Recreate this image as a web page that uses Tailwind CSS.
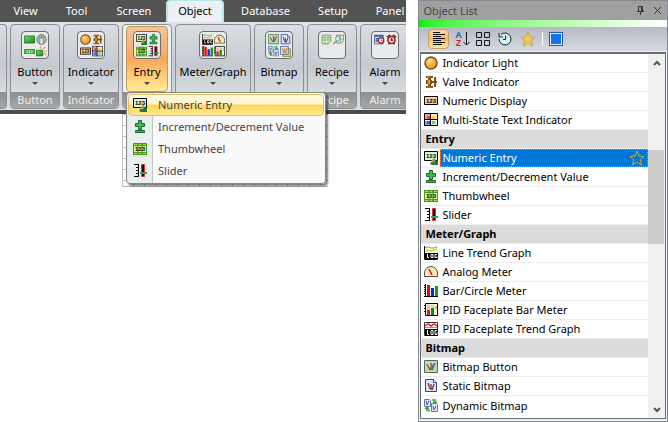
<!DOCTYPE html>
<html lang="en">
<head>
    <meta charset="UTF-8">
    <meta name="viewport" content="width=device-width, initial-scale=1.0">
    <title>Object List</title>
    <script src="https://cdn.jsdelivr.net/npm/@tailwindcss/browser@4"></script>
</head>
<body class="bg-white font-['Noto_Sans','Open_Sans',sans-serif] text-[11px] leading-4 text-black">
    <!-- Icon set -->
    <svg class="absolute size-0">
        <defs>
            <radialGradient id="amber" cx="0.4" cy="0.35"><stop offset="0" stop-color="#ffdc98"/><stop offset="1" stop-color="#f8a020"/></radialGradient>
            <linearGradient id="green" x1="0" y1="0" x2="1" y2="1"><stop offset="0" stop-color="#7fdc70"/><stop offset="1" stop-color="#0c8a14"/></linearGradient>
            <symbol id="light" viewBox="0 0 14 14"><circle cx="7" cy="7" r="6" fill="url(#amber)" stroke="#75541f" stroke-width="1.500"/></symbol>
            <symbol id="valve" viewBox="0 0 14 14"><path d="M2 1h7v2H7v2h1v4H7v2h2v2H2v-2h2V9H2V5h2V3H2zM10 2h2v4h1v2h-1v4h-2V8H8V6h2z" fill="#80520c"/><path d="M4 5h2v4H4z" fill="#d4a64c"/><path d="M3 2h3M3 12h4" stroke="#b98a3a"/></symbol>
            <symbol id="numdisp" viewBox="0 0 14 14"><path d="M.5 2.500h13v8H.5z" fill="#ffd08a" stroke="#000"/><text x="7" y="9" font-size="6" font-weight="bold" text-anchor="middle" font-family="Liberation Sans">123</text></symbol>
            <symbol id="multi" viewBox="0 0 14 14"><path d="M.5 .5h13v12H.5z" fill="#fff" stroke="#000"/><path d="M1 1h5v5H1z" fill="#f3a0a0"/><path d="M3 3h3v3H3z" fill="#d94848"/><path d="M8 1h5v5H8z" fill="#fff0b8"/><path d="M8 3h3v3H8z" fill="#f2c94a"/><path d="M1 8h5v4H1z" fill="#8da0f6"/><path d="M3 8h3v3H3z" fill="#3553d6"/><path d="M8 8h5v4H8z" fill="#d3efcf"/><path d="M8 8h3v3H8z" fill="#7cc47a"/><path d="M6.500 0v13M0 6.500h14" stroke="#000"/></symbol>
            <symbol id="numentry" viewBox="0 0 14 14"><path d="M.5 .5h13v9H.5z" fill="#d6f7cb" stroke="#000"/><text x="7" y="7" font-size="6" font-weight="bold" text-anchor="middle" font-family="Liberation Sans">123</text><path d="M6 13l3-4 5 1v4H8z" fill="#1f7a35"/><path d="M7 10l3-3 2 2-3 3z" fill="#b78b5a"/></symbol>
            <symbol id="incdec" viewBox="0 0 14 14"><path d="M5.500 .5h3v3h3v3h-3v3h-3v-3h-3v-3h3zM2.500 10.500h9v2h-9z" fill="#43b653" stroke="#176e2c"/></symbol>
            <symbol id="thumb" viewBox="0 0 14 14"><path d="M0 1h14v12H0z" fill="#4b9b12"/><path d="M1 4h12v6H1z" fill="#d6f29c"/><path d="M1 2.500h12M1 11.500h12" stroke="#a4e04e" stroke-dasharray="3 1.500"/><path d="M5 1v12M9 1v12" stroke="#4b9b12"/><text x="7" y="9" font-size="6" font-weight="bold" text-anchor="middle" font-family="Liberation Sans">123</text></symbol>
            <symbol id="slider" viewBox="0 0 14 14"><path d="M1 .5h5M3 3.500h3M3 6.500h3M3 9.500h3M1 12.500h5M5.500 0v13" stroke="#000"/><path d="M8.500 .5h3v12h-3z" fill="#111" stroke="#ee2b3b"/><path d="M7 8h7v2H7z" fill="#2fa84a"/></symbol>
            <symbol id="trend" viewBox="0 0 14 14"><path d="M.5 0v13.500h13" stroke="#000" fill="none"/><path d="M1 2l3-1 3 1 3 0 3-1" stroke="#63b33b" fill="none"/><path d="M1 5l3-1 3 1 3-1 3-1" stroke="#dfcb3d" stroke-width="1.500" fill="none"/><path d="M1 7h13v6H1z"/><path d="M3.500 8v3.500H5M7 8.500h2v3H7zM13 8.500h-2v3h2v-1" stroke="#fff" fill="none"/></symbol>
            <symbol id="meter" viewBox="0 0 14 14"><path d="M.5 11.500V8a6.500 6.500 0 0 1 13 0v3.500z" fill="#ffedb8" stroke="#4a4a4a"/><path d="M5 4l3 6" stroke="#f00" stroke-width="1.500"/></symbol>
            <symbol id="bars" viewBox="0 0 14 14"><path d="M1.500 0v13M0 12.500h14" stroke="#000"/><path d="M0 1.500h2M0 3.500h2M0 5.500h2M0 7.500h2M0 9.500h2" stroke="#000"/><path d="M3 1h3v11H3z" fill="#f00"/><path d="M7 4h3v8H7z" fill="#0a28f0"/><path d="M11 2h3v10h-3z" fill="#12a012"/></symbol>
            <symbol id="pidbar" viewBox="0 0 14 14"><path d="M1.500 .5h12v12h-12z" fill="#f8f5dc" stroke="#000"/><path d="M0 2.500h2M0 5.500h2M0 8.500h2" stroke="#000"/><path d="M3 2h3v5H3z" fill="#f6b5b5"/><path d="M3 7h3v5H3z" fill="#dc1c2c"/><path d="M7 2h3v3H7z" fill="#b6e4b0"/><path d="M7 5h3v7H7z" fill="#128a22"/><path d="M11 3h2v3h-2z" fill="#f0bf3a"/></symbol>
            <symbol id="pidtrend" viewBox="0 0 14 14"><path d="M.5 .5h13v13H.5z" fill="#fff" stroke="#333"/><path d="M1 4l3-2 3 2 3-2 3 2" stroke="#e02020" stroke-width="1.500" fill="none"/><path d="M1 5.500h12" stroke="#64b868"/><path d="M1 7h13v7H1z"/><path d="M3.500 8v4.500H5M7 8.500h2v4H7zM13 8.500h-2v4h2v-2" stroke="#fff" fill="none"/></symbol>
            <symbol id="bmpbutton" viewBox="0 0 14 14"><path d="M.5 .5h13v12H.5z" fill="#b4ddb0" stroke="#4f6f4f"/><path d="M3 4l3 6M7 3v7M11 3l-3 7" stroke="#a34b2d" stroke-width="1.500"/><path d="M4 3l2 4" stroke="#e5e5ff"/><path d="M9 4l-1 5" stroke="#4c6bc2"/></symbol>
            <symbol id="bmpstatic" viewBox="0 0 14 14"><path d="M1.500 .5h8l3 3v9h-11z" fill="#dbe7ff" stroke="#26459c"/><path d="M9.500 .5v3h3" fill="#fff" stroke="#26459c"/><path d="M4 4l2 6M7 5v6M10 5l-2 6" stroke="#8a4a4a" stroke-width="1.500"/><path d="M5 6l1 3" stroke="#5a7be0"/></symbol>
            <symbol id="bmpdyn" viewBox="0 0 14 14"><path d="M.5 .5h5l1 1v6h-6zM7.500 4.500h5l1 1v7h-6z" fill="#dbe7ff" stroke="#5d78bd"/><path d="M2 2l1 4 2-4M9 7l1 4 2-4" stroke="#7e4b64" fill="none"/><path d="M8 1h3v3M9 3l2 1 2-1M6 11.500H3V8M1 10l2-2 2 2" stroke="#35a642" stroke-width="1.500" fill="none"/></symbol>
            <symbol id="bmpmulti" viewBox="0 0 14 14"><path d="M3.500 3.500h10v10h-10z" fill="#c3d967" stroke="#738c25"/><path d="M.5 .5h10v10H.5z" fill="#ece8b7" stroke="#3454bd"/><path d="M3 3l2 6M6 3v6M9 3l-2 6" stroke="#9a5040"/></symbol>
            <symbol id="btn" viewBox="0 0 14 14"><path d="M.5 2.500h13v9H.5z" fill="url(#green)" stroke="#176d1d"/></symbol>
            <symbol id="knob" viewBox="0 0 14 14"><circle cx="7" cy="7" r="6" fill="#b3b6b7" stroke="#5b6062"/><path d="M5 1h4v12H5z" fill="#f5f5f5" stroke="#6f7375"/><path d="M7 2v4" stroke="#2aa52a" stroke-width="2"/></symbol>
            <symbol id="btnrow" viewBox="0 0 14 14"><path d="M.5 4.500h13v5H.5z" fill="#4bc143" stroke="#187721"/><path d="M4 5v5M7 5v5M10 5v5" stroke="#c8f2bf"/></symbol>
            <symbol id="btnlit" viewBox="0 0 14 14"><path d="M.5 5.500h8v7h-8z" fill="url(#green)" stroke="#176d1d"/><path d="M9 4l3-3M10 7l4-1M6 4V0M10 9l3 2" stroke="#f3a546" stroke-width="1.500"/></symbol>
            <symbol id="recipe" viewBox="0 0 14 14"><path d="M1.500 1.500h11v8l-3 3h-8z" fill="#e8f2dd" stroke="#598f34"/><path d="M1 4.500h12M1 7.500h11M5 1v12M9 1v12" stroke="#79aa58"/></symbol>
            <symbol id="recipefind" viewBox="0 0 14 14"><path d="M4.500 1.500h9v7l-3 3h-6z" fill="#e8f2dd" stroke="#598f34"/><path d="M5 6.500h8M9.500 2v9" stroke="#79aa58"/><path d="M4 9l-4 4" stroke="#e08a32" stroke-width="2"/><circle cx="6" cy="6" r="3" fill="#c6e9fb" stroke="#728ca0"/></symbol>
            <symbol id="alarmlist" viewBox="0 0 14 14"><path d="M.5 1.500h11v11H.5z" fill="#dfe9fb" stroke="#25518f"/><path d="M1 2.500h11M2 6h4M2 9h3" stroke="#25518f" stroke-width="2"/><circle cx="9" cy="8" r="3.500" fill="#fff" stroke="#8e2424" stroke-width="1.500"/><path d="M9 6v2.500h2" stroke="#8e2424" fill="none"/></symbol>
            <symbol id="alarm" viewBox="0 0 14 14"><circle cx="7" cy="7.500" r="4.500" fill="#f4dede" stroke="#8e2424" stroke-width="2"/><path d="M1 4l4-3M13 4L9 1M3 13l2-2M11 13l-2-2M7 5v3h2" stroke="#8e2424" stroke-width="2" fill="none"/></symbol>
            <symbol id="star" viewBox="0 0 16 16"><path d="M8 1l2 5 5 .5-3.800 3.200L12.500 15 8 12l-4.500 3 1.300-5.300L1 6.500 6 6z"/></symbol>
            <symbol id="arrow" viewBox="0 0 6 3"><path d="M0 0h6L3 3z" fill="#4a4a4a"/></symbol>
        </defs>
    </svg>

    <div class="flex min-h-screen items-stretch gap-3">
        <!-- Ribbon -->
        <div class="relative min-w-0 flex-[407]">
            <div class="overflow-hidden">
                <nav class="flex h-[22px] bg-[#535353] text-white">
                    <a href="#" class="w-[51px] shrink-0 pt-[3px] text-center">View</a>
                    <a href="#" class="w-[51px] shrink-0 pt-[3px] text-center">Tool</a>
                    <a href="#" class="w-[64px] shrink-0 pt-[3px] text-center">Screen</a>
                    <a href="#" class="w-[58px] shrink-0 rounded-t border-x-2 border-t border-[#b9e6ec] bg-[#eceff3] pt-[2px] text-center text-black">Object</a>
                    <a href="#" class="w-[83px] shrink-0 pt-[3px] text-center">Database</a>
                    <a href="#" class="w-[52px] shrink-0 pt-[3px] text-center">Setup</a>
                    <a href="#" class="w-[62px] shrink-0 pt-[3px] text-center">Panel</a>
                </nav>
                <div class="flex h-[88px] gap-[3px] bg-linear-to-b from-[#dfe2e7] via-[#c6cbd3] to-[#dbdfe3] pt-[2px] pb-[1px]">
                    <section class="flex w-[7px] shrink-0 flex-col justify-end rounded-r-sm border border-l-0 border-[#8b8f93] bg-linear-to-b from-[#dadde1] via-[#c5cad1] to-[#e2e8ea]">
                        <div class="h-4 bg-linear-to-b from-[#8d8e8e] to-[#a6a7a7]"></div>
                    </section>
                    <section class="flex w-[50px] shrink-0 flex-col overflow-hidden rounded-sm border border-[#8b8f93] bg-linear-to-b from-[#dadde1] via-[#c5cad1] to-[#e2e8ea]">
                        <button class="flex flex-1 flex-col items-center pt-[6px]">
                            <span class="grid size-7 shrink-0 grid-cols-2 place-items-center rounded-sm border border-[#6e6e6e] bg-[#e9eaeb] p-px">
                                <svg class="size-[11px]"><use href="#btn"/></svg><svg class="size-[11px]"><use href="#knob"/></svg>
                                <svg class="size-[11px]"><use href="#btnrow"/></svg><svg class="size-[11px]"><use href="#btnlit"/></svg>
                            </span>
                            <span class="mt-[5px]">Button</span>
                            <svg class="mt-[2px] h-[3px] w-[6px]"><use href="#arrow"/></svg>
                        </button>
                        <h2 class="h-4 bg-linear-to-b from-[#8d8e8e] to-[#a6a7a7] text-center text-[#f0f0f0]">Button</h2>
                    </section>
                    <section class="flex w-[56px] shrink-0 flex-col overflow-hidden rounded-sm border border-[#8b8f93] bg-linear-to-b from-[#dadde1] via-[#c5cad1] to-[#e2e8ea]">
                        <button class="flex flex-1 flex-col items-center pt-[6px]">
                            <span class="grid size-7 shrink-0 grid-cols-2 place-items-center rounded-sm border border-[#6e6e6e] bg-[#e9eaeb] p-px">
                                <svg class="size-[11px]"><use href="#light"/></svg><svg class="size-[11px]"><use href="#valve"/></svg>
                                <svg class="size-[11px]"><use href="#numdisp"/></svg><svg class="size-[11px]"><use href="#multi"/></svg>
                            </span>
                            <span class="mt-[5px]">Indicator</span>
                            <svg class="mt-[2px] h-[3px] w-[6px]"><use href="#arrow"/></svg>
                        </button>
                        <h2 class="h-4 bg-linear-to-b from-[#8d8e8e] to-[#a6a7a7] text-center text-[#f0f0f0]">Indicator</h2>
                    </section>
                    <section class="flex w-[50px] shrink-0 flex-col overflow-hidden rounded-sm border border-[#8b8f93] bg-[#eef1f3]">
                        <button class="mx-[3px] mt-px flex flex-1 flex-col items-center rounded-sm border border-[#c39a55] bg-linear-to-b from-[#f1c59c] via-[#faa659] to-[#fdec94] pt-[4px]">
                            <span class="grid size-7 shrink-0 grid-cols-2 place-items-center rounded-sm border border-[#6e6e6e] bg-[#e9eaeb] p-px">
                                <svg class="size-[11px]"><use href="#numentry"/></svg><svg class="size-[11px]"><use href="#incdec"/></svg>
                                <svg class="size-[11px]"><use href="#thumb"/></svg><svg class="size-[11px]"><use href="#slider"/></svg>
                            </span>
                            <span class="mt-[5px]">Entry</span>
                            <svg class="mt-[2px] h-[3px] w-[6px]"><use href="#arrow"/></svg>
                        </button>
                        <div class="h-4 bg-linear-to-b from-[#8d8e8e] to-[#a6a7a7]"></div>
                    </section>
                    <section class="flex w-[76px] shrink-0 flex-col overflow-hidden rounded-sm border border-[#8b8f93] bg-linear-to-b from-[#dadde1] via-[#c5cad1] to-[#e2e8ea]">
                        <button class="flex flex-1 flex-col items-center pt-[6px]">
                            <span class="grid size-7 shrink-0 grid-cols-2 place-items-center rounded-sm border border-[#6e6e6e] bg-[#e9eaeb] p-px">
                                <svg class="size-[11px]"><use href="#trend"/></svg><svg class="size-[11px]"><use href="#meter"/></svg>
                                <svg class="size-[11px]"><use href="#bars"/></svg><svg class="size-[11px]"><use href="#pidbar"/></svg>
                            </span>
                            <span class="mt-[5px]">Meter/Graph</span>
                            <svg class="mt-[2px] h-[3px] w-[6px]"><use href="#arrow"/></svg>
                        </button>
                        <div class="h-4 bg-linear-to-b from-[#8d8e8e] to-[#a6a7a7]"></div>
                    </section>
                    <section class="flex w-[50px] shrink-0 flex-col overflow-hidden rounded-sm border border-[#8b8f93] bg-linear-to-b from-[#dadde1] via-[#c5cad1] to-[#e2e8ea]">
                        <button class="flex flex-1 flex-col items-center pt-[6px]">
                            <span class="grid size-7 shrink-0 grid-cols-2 place-items-center rounded-sm border border-[#6e6e6e] bg-[#e9eaeb] p-px">
                                <svg class="size-[11px]"><use href="#bmpbutton"/></svg><svg class="size-[11px]"><use href="#bmpstatic"/></svg>
                                <svg class="size-[11px]"><use href="#bmpdyn"/></svg><svg class="size-[11px]"><use href="#bmpmulti"/></svg>
                            </span>
                            <span class="mt-[5px]">Bitmap</span>
                            <svg class="mt-[2px] h-[3px] w-[6px]"><use href="#arrow"/></svg>
                        </button>
                        <div class="h-4 bg-linear-to-b from-[#8d8e8e] to-[#a6a7a7]"></div>
                    </section>
                    <section class="flex w-[50px] shrink-0 flex-col overflow-hidden rounded-sm border border-[#8b8f93] bg-linear-to-b from-[#dadde1] via-[#c5cad1] to-[#e2e8ea]">
                        <button class="flex flex-1 flex-col items-center pt-[6px]">
                            <span class="grid size-7 shrink-0 grid-cols-2 grid-rows-2 place-items-center rounded-sm border border-[#6e6e6e] bg-[#e9eaeb] p-px">
                                <svg class="size-[11px]"><use href="#recipe"/></svg><svg class="size-[11px]"><use href="#recipefind"/></svg>
                            </span>
                            <span class="mt-[5px]">Recipe</span>
                            <svg class="mt-[2px] h-[3px] w-[6px]"><use href="#arrow"/></svg>
                        </button>
                        <h2 class="h-4 bg-linear-to-b from-[#8d8e8e] to-[#a6a7a7] text-center text-[#f0f0f0]">Recipe</h2>
                    </section>
                    <section class="flex w-[50px] shrink-0 flex-col overflow-hidden rounded-sm border border-[#8b8f93] bg-linear-to-b from-[#dadde1] via-[#c5cad1] to-[#e2e8ea]">
                        <button class="flex flex-1 flex-col items-center pt-[6px]">
                            <span class="grid size-7 shrink-0 grid-cols-2 grid-rows-2 place-items-center rounded-sm border border-[#6e6e6e] bg-[#e9eaeb] p-px">
                                <svg class="size-[11px]"><use href="#alarmlist"/></svg><svg class="size-[11px]"><use href="#alarm"/></svg>
                            </span>
                            <span class="mt-[5px]">Alarm</span>
                            <svg class="mt-[2px] h-[3px] w-[6px]"><use href="#arrow"/></svg>
                        </button>
                        <h2 class="h-4 bg-linear-to-b from-[#8d8e8e] to-[#a6a7a7] text-center text-[#f0f0f0]">Alarm</h2>
                    </section>
                </div>
                <div class="h-1 bg-[#4b4b4d]"></div>
                <!-- Canvas grid behind the menu -->
                <div class="ml-[122px] h-[73px] w-[206px] border-b border-[#b5b5b5] bg-[repeating-linear-gradient(to_right,#c4c4c4_0_1px,transparent_1px_11px),repeating-linear-gradient(to_bottom,#c4c4c4_0_1px,transparent_1px_11px)]"></div>
            </div>

            <!-- Entry menu -->
            <div class="absolute top-[92px] left-[126px] w-[200px] rounded-sm border border-[#868686] bg-[linear-gradient(to_right,#e9eeee_0_25px,#c5c5c5_25px_26px,#fafafa_26px)] p-px text-[#444] shadow-[2px_2px_2px_rgba(0,0,0,0.5)]" role="menu">
                <button role="menuitem" class="flex h-[22px] w-full items-center gap-[11px] rounded-sm border border-[#e3c06b] bg-linear-to-b from-[#fff6d6] from-45% via-[#ffd74c] via-50% to-[#ffe793] pl-1"><svg class="size-3.5"><use href="#numentry"/></svg>Numeric Entry</button>
                <button role="menuitem" class="flex h-[22px] w-full items-center gap-[11px] pl-[5px]"><svg class="size-3.5"><use href="#incdec"/></svg>Increment/Decrement Value</button>
                <button role="menuitem" class="flex h-[22px] w-full items-center gap-[11px] pl-[5px]"><svg class="size-3.5"><use href="#thumb"/></svg>Thumbwheel</button>
                <button role="menuitem" class="flex h-[22px] w-full items-center gap-[11px] pl-[5px]"><svg class="size-3.5"><use href="#slider"/></svg>Slider</button>
            </div>
        </div>

        <!-- Object list panel -->
        <aside class="flex min-w-0 flex-[248] flex-col border border-[#868993] bg-[#f0f0f0]">
            <header class="flex h-[19px] items-center gap-2 bg-[#a0a0a0] pr-[5px] pl-1 text-[#444]">
                <h1 class="flex-1">Object List</h1>
                <button aria-label="Pin"><svg class="size-[9px]" viewBox="0 0 9 9" fill="none" stroke="#333"><path d="M2.500 5.500v-5h4v5M5.500 1v4M1 5.500h7M4.500 6v3"/></svg></button>
                <button aria-label="Close"><svg class="size-[9px]" viewBox="0 0 9 9" stroke="#333"><path d="M1 1l7 7M8 1l-7 7"/></svg></button>
            </header>
            <div class="h-[7px] bg-linear-to-r from-[#00f000] to-white"></div>
            <div class="flex h-[24px] items-center bg-linear-to-b from-[#b4bac5] to-[#d6dae0] pl-[9px]" role="toolbar">
                <button aria-label="By category" class="flex h-5 w-[21px] items-center justify-center rounded-sm border border-[#c59f62] bg-linear-to-b from-[#ffd5a2] via-[#f9b565] to-[#fdeaa0]"><svg class="size-4" viewBox="0 0 16 16" stroke="#111"><path d="M2 1.500h7M2 3.500h12M2 5.500h8M2 7.500h12M2 9.500h8M2 11.500h12M2 13.500h9"/></svg></button>
                <button aria-label="Sort by name" class="ml-[5px] flex gap-px">
                    <span class="flex w-2 flex-col font-['Liberation_Sans',sans-serif] text-[9px] leading-[8px] font-bold"><span class="text-[#1560ac]">A</span><span class="text-[#e01b24]">Z</span></span>
                    <svg class="h-4 w-[7px]" viewBox="0 0 7 16" fill="none" stroke="#111"><path d="M3.500 1v13M.5 11l3 3 3-3"/></svg>
                </button>
                <button aria-label="Icons" class="ml-[6px]"><svg class="size-[14px]" viewBox="0 0 14 14" fill="none" stroke="#111"><path d="M.5 .5h5v5h-5zM8.500 .5h5v5h-5zM.5 8.500h5v5h-5zM8.500 8.500h5v5h-5z"/></svg></button>
                <button aria-label="History" class="ml-2"><svg class="size-[14px]" viewBox="0 0 14 14"><path d="M3 2.500A6 6 0 1 1 1 7" fill="#d6f0f7" stroke="#222"/><path d="M1 1v4h4M7.500 3.500v4H5" stroke="#222" fill="none"/></svg></button>
                <button aria-label="Favorites" class="ml-2"><svg class="size-4 fill-[#f2c75c] stroke-[#d9a53a]"><use href="#star"/></svg></button>
                <span class="mx-[6px] h-[14px] w-px bg-white"></span>
                <button aria-label="Preview" class="size-[14px] border border-[#1b5ec0] bg-[#1b71ea] outline outline-[#e4edf8] -outline-offset-2"></button>
            </div>
            <div class="m-px mb-[2px] flex flex-1 border border-t-2 border-[#6b6e75] bg-white">
                <ul class="min-w-0 flex-1">
                    <li class="flex h-[19px] items-center gap-1 border-b border-[#ededed] pl-[3px]"><svg class="size-3.5"><use href="#light"/></svg>Indicator Light</li>
                    <li class="flex h-[19px] items-center gap-1 border-b border-[#ededed] pl-[3px]"><svg class="size-3.5"><use href="#valve"/></svg>Valve Indicator</li>
                    <li class="flex h-[19px] items-center gap-1 border-b border-[#ededed] pl-[3px]"><svg class="size-3.5"><use href="#numdisp"/></svg>Numeric Display</li>
                    <li class="flex h-[19px] items-center gap-1 border-b border-[#ededed] pl-[3px]"><svg class="size-3.5"><use href="#multi"/></svg>Multi-State Text Indicator</li>
                    <li class="flex h-[19px] items-center border-b border-[#ededed] bg-[#dbdbdb] pl-1 font-bold">Entry</li>
                    <li class="flex h-[19px] items-center gap-[2px] border-b border-[#ededed] pl-[3px]"><svg class="size-3.5"><use href="#numentry"/></svg><span class="flex h-full flex-1 items-center justify-between border border-dotted border-[#ff8728] bg-[#0078d7] pr-[2px] pl-px text-white">Numeric Entry<svg class="size-4 fill-none stroke-[#d9a62e]"><use href="#star"/></svg></span></li>
                    <li class="flex h-[19px] items-center gap-1 border-b border-[#ededed] pl-[3px]"><svg class="size-3.5"><use href="#incdec"/></svg>Increment/Decrement Value</li>
                    <li class="flex h-[19px] items-center gap-1 border-b border-[#ededed] pl-[3px]"><svg class="size-3.5"><use href="#thumb"/></svg>Thumbwheel</li>
                    <li class="flex h-[19px] items-center gap-1 border-b border-[#ededed] pl-[3px]"><svg class="size-3.5"><use href="#slider"/></svg>Slider</li>
                    <li class="flex h-[19px] items-center border-b border-[#ededed] bg-[#dbdbdb] pl-1 font-bold">Meter/Graph</li>
                    <li class="flex h-[19px] items-center gap-1 border-b border-[#ededed] pl-[3px]"><svg class="size-3.5"><use href="#trend"/></svg>Line Trend Graph</li>
                    <li class="flex h-[19px] items-center gap-1 border-b border-[#ededed] pl-[3px]"><svg class="size-3.5"><use href="#meter"/></svg>Analog Meter</li>
                    <li class="flex h-[19px] items-center gap-1 border-b border-[#ededed] pl-[3px]"><svg class="size-3.5"><use href="#bars"/></svg>Bar/Circle Meter</li>
                    <li class="flex h-[19px] items-center gap-1 border-b border-[#ededed] pl-[3px]"><svg class="size-3.5"><use href="#pidbar"/></svg>PID Faceplate Bar Meter</li>
                    <li class="flex h-[19px] items-center gap-1 border-b border-[#ededed] pl-[3px]"><svg class="size-3.5"><use href="#pidtrend"/></svg>PID Faceplate Trend Graph</li>
                    <li class="flex h-[19px] items-center border-b border-[#ededed] bg-[#dbdbdb] pl-1 font-bold">Bitmap</li>
                    <li class="flex h-[19px] items-center gap-1 border-b border-[#ededed] pl-[3px]"><svg class="size-3.5"><use href="#bmpbutton"/></svg>Bitmap Button</li>
                    <li class="flex h-[19px] items-center gap-1 border-b border-[#ededed] pl-[3px]"><svg class="size-3.5"><use href="#bmpstatic"/></svg>Static Bitmap</li>
                    <li class="flex h-[19px] items-center gap-1 pl-[3px]"><svg class="size-3.5"><use href="#bmpdyn"/></svg>Dynamic Bitmap</li>
                </ul>
                <!-- Scrollbar -->
                <div class="flex w-[17px] flex-col bg-[#f0f0f0]">
                    <button aria-label="Scroll up" class="flex h-[17px] items-center justify-center"><svg class="h-[6px] w-2" viewBox="0 0 8 6" fill="none" stroke="#555" stroke-width="2"><path d="M1 5l3-3 3 3"/></svg></button>
                    <div class="flex flex-1 flex-col">
                        <div class="flex-[79]"></div>
                        <div class="mr-px flex-[95] bg-[#cdcdcd]"></div>
                        <div class="flex-[158]"></div>
                    </div>
                    <button aria-label="Scroll down" class="flex h-[17px] items-center justify-center"><svg class="h-[6px] w-2" viewBox="0 0 8 6" fill="none" stroke="#555" stroke-width="2"><path d="M1 1l3 3 3-3"/></svg></button>
                </div>
            </div>
        </aside>
    </div>
</body>
</html>
